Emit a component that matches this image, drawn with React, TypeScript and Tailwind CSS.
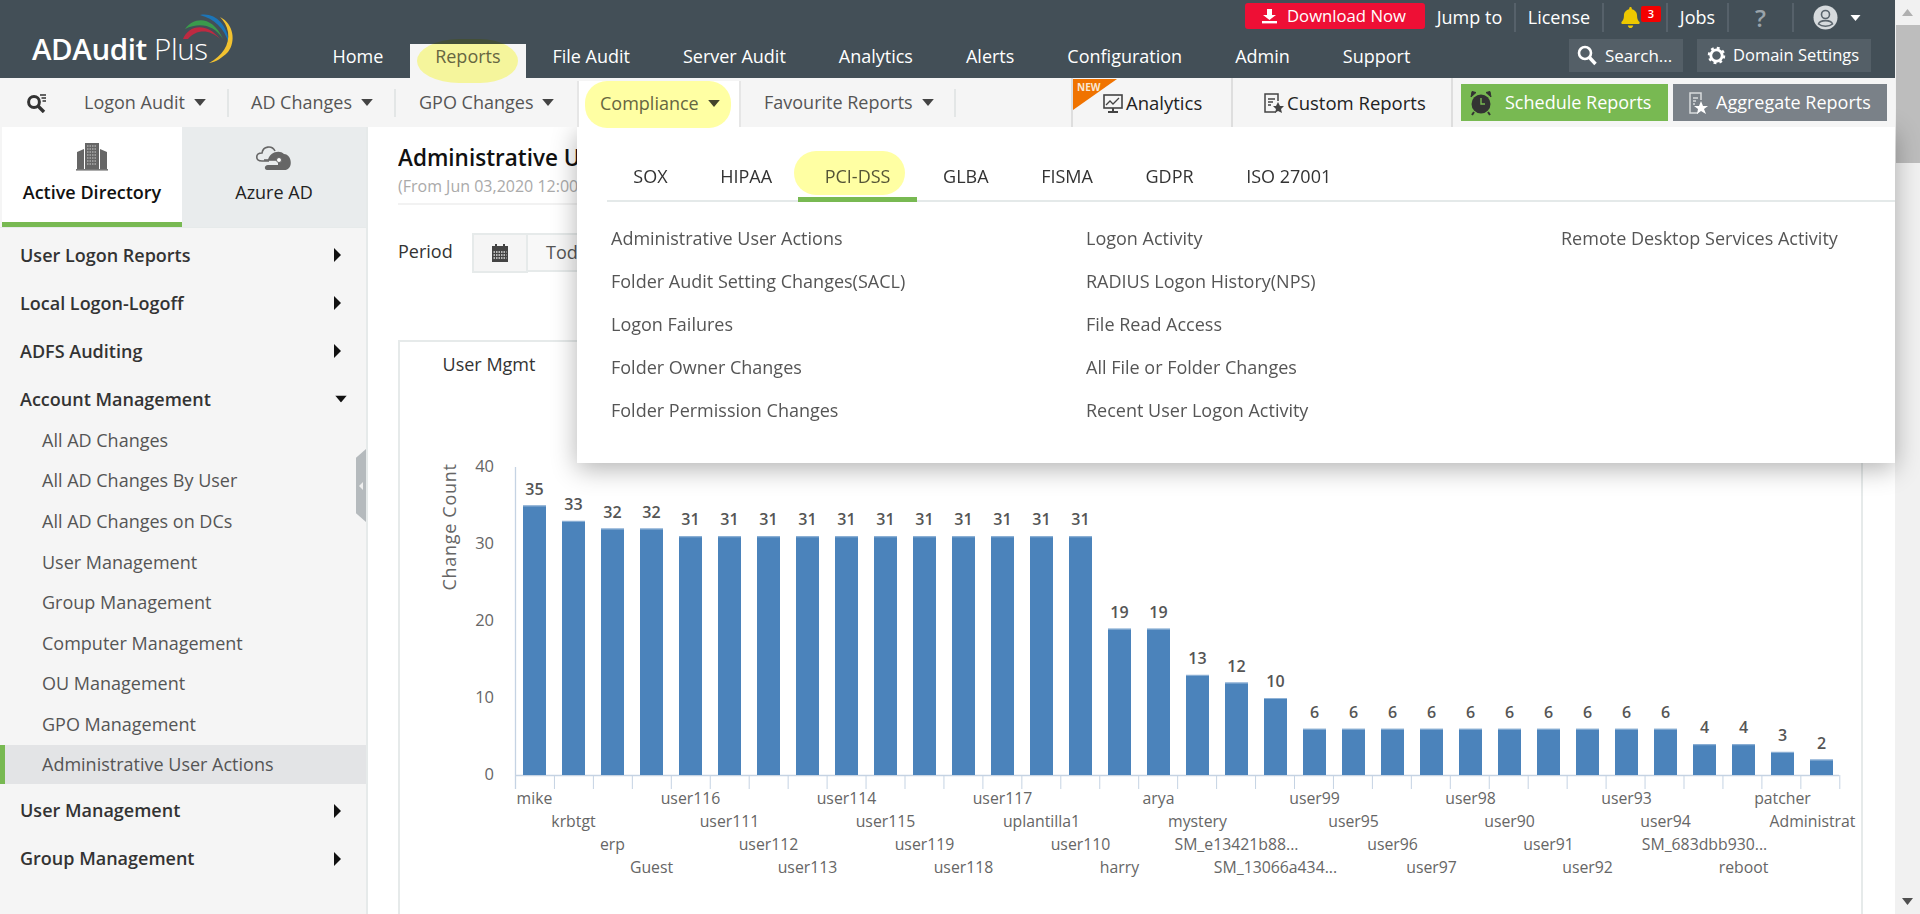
import React from "react";
import { FaBell } from "react-icons/fa";

const FONT = "font-['Open_Sans','Noto_Sans',sans-serif]";

const Down = ({ c = "#444", w = 11, h = 6 }: { c?: string; w?: number; h?: number }) => (
  <svg width={w} height={h} viewBox="0 0 10 6" className="shrink-0"><polygon points="0,0 10,0 5,6" fill={c} /></svg>
);
const Right = () => (
  <svg width="7" height="14" viewBox="0 0 7 14" className="shrink-0"><polygon points="0,0 7,7 0,14" fill="#111" /></svg>
);

const Logo = () => (
  <div className="relative w-[306px] h-[78px] shrink-0">
    <div className="absolute left-[32px] top-[29px] text-[29.5px] leading-[40px] text-white whitespace-nowrap tracking-[-0.4px]">
      <span className="font-semibold">ADAudit</span> <span className="font-light">Plus</span>
    </div>
    <svg className="absolute left-[176px] top-[12px]" width="60" height="54" viewBox="0 0 60 54" fill="none">
      <path d="M7 27C12 14 30 9 44 27C34 17 20 17 12 27Z" fill="#be2a41" />
      <path d="M9 17C18 5 36 3 47 27C38 13 24 10 9 17Z" fill="#3a9a4c" />
      <path d="M24 3C38 0 52 12 53 32C48 15 38 7 24 3Z" fill="#1c75b8" />
      <path d="M44 5C58 12 60 30 52 40C46 46 40 50 33 51C46 44 54 33 52 20C51 14 48 9 44 5Z" fill="#f2c230" />
    </svg>
  </div>
);

const MAIN = ["Home", "Reports", "File Audit", "Server Audit", "Analytics", "Alerts", "Configuration", "Admin", "Support"];

const TopLink = ({ children, last }: { children: React.ReactNode; last?: boolean }) => (
  <div className={`h-[29px] flex items-center justify-center ${last ? "" : "border-r-2 border-[#56616a]"}`}>{children}</div>
);

const Header = () => (
  <div className="h-[78px] bg-[#434f57] flex shrink-0 relative">
    <Logo />
    <div className="flex items-end h-full">
      {MAIN.map((m) =>
        m === "Reports" ? (
          <div key={m} className="h-[34px] w-[116px] bg-[#f5f5f5] text-[#666] text-[18px] flex items-center justify-center pb-[9px]">{m}</div>
        ) : (
          <div key={m} className="h-[34px] px-[26.5px] text-white text-[18px] flex items-center whitespace-nowrap pb-[9px]">{m}</div>
        )
      )}
    </div>
    <div className="absolute right-[24px] top-[39px] flex gap-[14px]">
      <div className="h-[33px] w-[114px] bg-[#545f67] flex items-center text-white text-[17px] pl-[8px] gap-[8px]">
        <svg width="20" height="21" viewBox="0 0 20 21" fill="none" stroke="#fff" strokeWidth="2.6"><circle cx="8" cy="8" r="6" /><path d="M12.5 12.5L18.5 19" strokeWidth="3.4" /></svg>
        Search...
      </div>
      <div className="h-[33px] w-[174px] bg-[#545f67] flex items-center text-white text-[16.5px] pl-[10px] gap-[7px]">
        <svg width="19" height="19" viewBox="0 0 20 20" fill="none" stroke="#fff"><circle cx="10" cy="10" r="6" strokeWidth="3" /><circle cx="10" cy="10" r="8" strokeWidth="2.4" strokeDasharray="3 3.3" /></svg>
        Domain Settings
      </div>
    </div>
    <div className="absolute right-0 top-[3px] flex items-start text-white text-[18px] w-[650px]">
      <div className="w-[180px] h-[26px] bg-[#ee0f35] rounded-[3px] flex items-center pl-[16px] gap-[9px] text-[16.7px] shrink-0">
        <svg width="17" height="17" viewBox="0 0 17 17" fill="#fff"><path d="M6 1H11V7H15L8.5 12L2 7H6Z" /><rect x="1" y="13" width="15" height="2.4" /></svg>
        Download Now
      </div>
      <div className="w-[91px]"><TopLink>Jump to</TopLink></div>
      <div className="w-[88px]"><TopLink>License</TopLink></div>
      <div className="w-[64px]">
        <TopLink>
          <div className="relative w-full flex justify-center">
            <FaBell className="text-[#eec800] text-[21px] mr-[10px]" />
            <span className="absolute left-[37px] top-[-1px] w-[20px] h-[16px] bg-[#f40000] rounded-[2px] text-[11px] leading-[16px] text-center font-semibold">3</span>
          </div>
        </TopLink>
      </div>
      <div className="w-[61px]"><TopLink>Jobs</TopLink></div>
      <div className="w-[65px]"><TopLink><span className="text-[#9aa3aa] text-[24px] font-semibold">?</span></TopLink></div>
      <div className="w-[101px] h-[29px] flex items-center pl-[19px] gap-[12px]">
        <svg width="25" height="25" viewBox="0 0 25 25"><circle cx="12.5" cy="12.5" r="12" fill="#d6dadd" /><circle cx="12.5" cy="9.5" r="4" fill="none" stroke="#5a646c" strokeWidth="1.6" /><path d="M5.5 19C7 14.5 18 14.5 19.5 19C16 22 9 22 5.5 19Z" fill="none" stroke="#5a646c" strokeWidth="1.6" /></svg>
        <Down c="#fff" w={11} h={6} />
      </div>
    </div>
  </div>
);

const SubItem = ({ label, w, sep = true, pl = 23 }: { label: string; w: string; sep?: boolean; pl?: number }) => (
  <div className={`${w} h-full flex items-center relative text-[#555] text-[18px] gap-[9px] shrink-0 whitespace-nowrap`} style={{ paddingLeft: pl }}>
    {label}
    <Down w={12} h={7} />
    {sep && <div className="absolute right-0 top-[11px] h-[28px] w-[2px] bg-[#e3e6e6]" />}
  </div>
);

const SubNav = () => (
  <div className="h-[49px] bg-[#f5f5f5] flex shrink-0 relative z-20">
    <div className="w-[66px] h-full flex items-center pl-[26px] shrink-0">
      <svg width="21" height="20" viewBox="0 0 21 20" fill="none" stroke="#333"><circle cx="8" cy="9" r="5.4" strokeWidth="3" /><path d="M12 13L18 19" strokeWidth="3.4" /><path d="M14 2H20M15.5 5H20M16.5 8H20" strokeWidth="1.3" /></svg>
    </div>
    <SubItem label="Logon Audit" w="w-[163px]" pl={18} />
    <SubItem label="AD Changes" w="w-[167px]" pl={22} />
    <SubItem label="GPO Changes" w="w-[181px]" sep={false} pl={23} />
    <div className="w-[164px] h-[46px] mt-[3px] bg-white border-l-2 border-r-2 border-[#e6e6e6] flex items-center pl-[21px] gap-[9px] text-[#666] text-[18px] shrink-0 pb-[1px]">
      Compliance
      <Down w={12} h={7} />
    </div>
    <SubItem label="Favourite Reports" w="w-[215px]" />
    <div className="w-[115px] shrink-0" />
    <div className="w-[160px] h-full border-l-2 border-[#dedede] relative flex items-center pl-[29px] gap-[2px] text-[#222] text-[18.5px] shrink-0">
      <svg className="absolute left-0 top-0" width="44" height="32" viewBox="0 0 44 32"><polygon points="0,1 44,1 0,32" fill="#f07300" /></svg>
      <span className="absolute left-[4px] top-[2px] text-[10px] leading-[14px] font-bold text-[#f8e7d2]">NEW</span>
      <svg width="22" height="22" viewBox="0 0 22 22" fill="none" stroke="#444" className="relative"><rect x="2" y="3" width="18" height="13" strokeWidth="1.6" /><path d="M4 13L8 9L11 12L17 6" strokeWidth="1.3" /><path d="M11 16V19M6 20H16" strokeWidth="2" /></svg>
      Analytics
    </div>
    <div className="w-[222px] h-full border-l-2 border-r-2 border-[#dedede] flex items-center pl-[30px] gap-[3px] text-[#222] text-[18.5px] shrink-0">
      <svg width="21" height="22" viewBox="0 0 21 22" fill="none" stroke="#444"><path d="M13 20H2V2H15V9" strokeWidth="1.5" /><path d="M5 7H12M5 10H10M5 13H8" strokeWidth="1.4" /><polygon points="15,10 17,14 21,14 18,17 19,21 15,19 12,21 13,17 10,14 13,14" fill="#444" stroke="none" /></svg>
      Custom Reports
    </div>
    <div className="ml-[8px] mt-[6px] w-[207px] h-[37px] bg-[#78b952] text-white text-[18px] flex items-center pl-[8px] gap-[12px] shrink-0">
      <svg width="24" height="26" viewBox="0 0 24 26"><circle cx="12" cy="14" r="9.5" fill="#333" /><path d="M2 7L7 2.5L3 1.5ZM22 7L17 2.5L21 1.5Z" fill="#333" stroke="#333" /><path d="M12 8V14H16" stroke="#78b952" strokeWidth="1.4" fill="none" /><path d="M5 22L3 25M19 22L21 25" stroke="#333" strokeWidth="2" /></svg>
      Schedule Reports
    </div>
    <div className="ml-[5px] mt-[6px] w-[214px] h-[37px] bg-[#7a8188] text-white text-[18px] flex items-center pl-[15px] gap-[8px] shrink-0">
      <svg width="20" height="24" viewBox="0 0 20 24" fill="none" stroke="#d8dadc"><path d="M10 22H2V2H13V9" strokeWidth="1.5" /><path d="M5 7H10M5 10H8M5 13H7" strokeWidth="1.4" /><polygon points="13,10 15,15 20,15 16,18 18,23 13,20 9,23 10,18 6,15 11,15" fill="#fff" stroke="none" /></svg>
      Aggregate Reports
    </div>
  </div>
);

const GROUPS_TOP = ["User Logon Reports", "Local Logon-Logoff", "ADFS Auditing"];
const SUBS = ["All AD Changes", "All AD Changes By User", "All AD Changes on DCs", "User Management", "Group Management", "Computer Management", "OU Management", "GPO Management"];

const Group = ({ label, open }: { label: string; open?: boolean }) => (
  <div className="h-[48px] flex items-center pl-[20px] text-[18px] font-semibold text-[#333] relative">
    {label}
    <span className={`absolute top-1/2 -translate-y-1/2 ${open ? "left-[335px]" : "left-[334px]"}`}>{open ? <Down c="#111" w={12} h={7} /> : <Right />}</span>
  </div>
);

const Sidebar = () => (
  <div className="w-[368px] shrink-0 bg-[#f5f5f5] border-r-2 border-[#e6eaea] relative h-full">
    <div className="h-[101px] flex border-b border-[#e6eaea] pl-[2px] bg-[#f5f5f5]">
      <div className="w-[180px] h-full bg-white border-b-[5px] border-[#78b952] flex flex-col items-center pt-[16px] text-[18px] font-semibold text-[#111]">
        <svg width="32" height="28" viewBox="0 0 32 28">
          <path d="M1 27V9L8 6V27ZM24 6L31 9V27H24Z" fill="#666" />
          <rect x="9" y="0" width="14" height="27" fill="#666" />
          <path d="M11 3H21M11 6H21M11 9H21M11 12H21M11 15H21M11 18H21M11 21H21" stroke="#ccc" strokeWidth="1" strokeDasharray="1.5 1" />
          <rect x="0" y="26" width="32" height="1.6" fill="#777" />
        </svg>
        <span className="mt-[9px] leading-[24px]">Active Directory</span>
      </div>
      <div className="flex-1 h-full bg-[#e9eced] flex flex-col items-center pt-[18px] text-[18px] text-[#222]">
        <svg width="38" height="26" viewBox="0 0 38 26" fill="none">
          <path d="M14 16H7C0 16 0 8 7 8C8 1 17 0 20 6" stroke="#666" strokeWidth="1.6" />
          <path d="M12 25C9 25 9 20 13 20H23V15H13C14 8 24 4 29 9C37 9 39 25 29 25Z" fill="#666" />
          <path d="M9 15H23" stroke="#666" strokeWidth="1.6" />
          <circle cx="24" cy="15" r="2.5" fill="#fff" stroke="#666" />
        </svg>
        <span className="mt-[9px] leading-[24px]">Azure AD</span>
      </div>
    </div>
    <div className="pt-[3px]">
      {GROUPS_TOP.map((g) => <Group key={g} label={g} />)}
      <Group label="Account Management" open />
      <div className="-mt-[3px]">
        {SUBS.map((s) => (
          <div key={s} className="h-[40.6px] flex items-center pl-[42px] text-[18px] text-[#555]">{s}</div>
        ))}
        <div className="h-[39px] flex items-center pl-[37px] text-[18px] text-[#555] bg-[#e3e4e6] border-l-[5px] border-[#78b952]">Administrative User Actions</div>
      </div>
      <div className="pt-[3px]">
        <Group label="User Management" />
        <Group label="Group Management" />
      </div>
    </div>
    <div className="absolute right-0 top-[322px] w-[10px] h-[73px] bg-[#b5babd] [clip-path:polygon(100%_0,100%_100%,0_88%,0_12%)] flex items-center justify-center">
      <svg width="4" height="8" viewBox="0 0 4 8"><polygon points="4,0 0,4 4,8" fill="#eee" /></svg>
    </div>
  </div>
);

const VALUES = [35, 33, 32, 32, 31, 31, 31, 31, 31, 31, 31, 31, 31, 31, 31, 19, 19, 13, 12, 10, 6, 6, 6, 6, 6, 6, 6, 6, 6, 6, 4, 4, 3, 2];
const NAMES = ["mike", "krbtgt", "erp", "Guest", "user116", "user111", "user112", "user113", "user114", "user115", "user119", "user118", "user117", "uplantilla1", "user110", "harry", "arya", "mystery", "SM_e13421b88...", "SM_13066a434...", "user99", "user95", "user96", "user97", "user98", "user90", "user91", "user92", "user93", "user94", "SM_683dbb930...", "reboot", "patcher", "Administrat"];

const Chart = () => {
  const base = 776;
  const cx = (i: number) => 534.5 + i * 39;
  return (
    <svg className="block" width="1461" height="524" viewBox="400 388 1461 524" fontFamily="'Open Sans', sans-serif">
      <text transform="translate(456 528) rotate(-90)" textAnchor="middle" fontSize="18" fill="#666" letterSpacing="0.7">Change Count</text>
      {[0, 10, 20, 30, 40].map((v) => (
        <text key={v} x="494" y={base - v * 7.7 + 5} textAnchor="end" fontSize="16.5" fill="#666">{v}</text>
      ))}
      <path d="M515.5 468V790" stroke="#c5d3e3" strokeWidth="1.3" />
      <path d="M515 776.5H1839" stroke="#c5d3e3" strokeWidth="1.5" />
      {Array.from({ length: 35 }).map((_, i) => (
        <path key={i} d={`M${515.5 + i * 38.95} 776V790`} stroke="#c5d3e3" strokeWidth="1" />
      ))}
      {VALUES.map((v, i) => {
        const h = v * 7.7;
        return (
          <g key={i}>
            <rect x={523 + i * 39} y={base - h} width="23" height={h} fill="#4b83bb" />
            <rect x={523 + i * 39} y={base - h} width="23" height="1" fill="#8fb2d6" />
            <text x={cx(i)} y={base - h - 11} textAnchor="middle" fontSize="16" fontWeight="600" fill="#555">{v}</text>
          </g>
        );
      })}
      {NAMES.map((n, i) => (
        <text key={n} x={cx(i) + (i === 33 ? -9 : 0)} y={805 + (i % 4) * 23} textAnchor="middle" fontSize="15.8" fill="#666">{n}</text>
      ))}
    </svg>
  );
};

const Main = () => (
  <div className="flex-1 min-w-0 bg-white h-full pl-[30px] pr-[32px] overflow-hidden">
    <div className="h-[78px] pt-[16px] border-b-2 border-[#f2f2f2] w-full">
      <div className="w-[179px] overflow-hidden text-[22.5px] leading-[30px] font-semibold text-[#111] whitespace-nowrap">Administrative User Actions</div>
      <div className="w-[179px] overflow-hidden text-[16px] leading-[20px] text-[#aaa] mt-[3px] whitespace-nowrap">(From Jun 03,2020 12:00 AM)</div>
    </div>
    <div className="flex items-start mt-[28px] h-[40px]">
      <div className="w-[74px] text-[18px] text-[#333] leading-[36px]">Period</div>
      <div className="w-[56px] h-[40px] bg-[#f5f5f5] border-2 border-[#e6eaea] flex items-center justify-center">
        <svg width="18" height="19" viewBox="0 0 18 19"><rect x="1" y="2" width="16" height="16" fill="#444" /><rect x="4" y="0" width="2" height="4" fill="#444" /><rect x="12" y="0" width="2" height="4" fill="#444" /><path d="M2.5 8H15.5M2.5 11H15.5M2.5 14H15.5" stroke="#ddd" strokeWidth="1.3" strokeDasharray="1.5 1" /></svg>
      </div>
      <div className="w-[120px] h-[39px] border-2 border-l-0 border-[#e6eaea] bg-[#f8f8f8] text-[18px] text-[#555] flex items-center pl-[18px]">Today</div>
    </div>
    <div className="mt-[67px] h-[47px] flex border-b-[3px] border-[#e6eaea]">
      <div className="w-[182px] h-[47px] bg-white border-l-2 border-t-2 border-[#e6eaea] flex items-center justify-center text-[18px] text-[#333] pr-[2px]">User Mgmt</div>
    </div>
    <div className="border-l-2 border-r-2 border-[#e6eaea] h-[530px] w-[1465px] overflow-hidden">
      <Chart />
    </div>
  </div>
);

const COLS = [
  ["Administrative User Actions", "Folder Audit Setting Changes(SACL)", "Logon Failures", "Folder Owner Changes", "Folder Permission Changes"],
  ["Logon Activity", "RADIUS Logon History(NPS)", "File Read Access", "All File or Folder Changes", "Recent User Logon Activity"],
  ["Remote Desktop Services Activity"],
];
const TABS = ["SOX", "HIPAA", "PCI-DSS", "GLBA", "FISMA", "GDPR", "ISO 27001"];

const Popup = () => (
  <div className="absolute left-[577px] top-[127px] right-0 h-[336px] bg-white shadow-[0_6px_24px_rgba(0,0,0,0.3)] z-10">
    <div className="ml-[30px] h-[75px] flex items-end border-b-2 border-[#e4e9e9]">
      {TABS.map((t) => (
        <div key={t} className={`h-[50px] -mb-[2px] px-[26.3px] pt-[4px] flex items-center text-[18px] whitespace-nowrap ${t === "PCI-DSS" ? "border-b-[5px] border-[#78b952] text-[#555]" : "border-b-[5px] border-transparent text-[#333]"}`}>{t}</div>
      ))}
    </div>
    <div className="grid grid-cols-[475px_475px_1fr] pl-[34px] pt-[15px]">
      {COLS.map((col, i) => (
        <div key={i}>
          {col.map((l) => <div key={l} className="h-[43px] flex items-center text-[18px] text-[#555] whitespace-nowrap">{l}</div>)}
        </div>
      ))}
    </div>
  </div>
);

const Scrollbar = () => (
  <div className="w-[25px] h-full bg-[#f1f1f1] flex flex-col shrink-0">
    <div className="h-[25px] flex items-center justify-center"><svg width="11" height="7" viewBox="0 0 11 7"><polygon points="5.5,0 11,7 0,7" fill="#b0b0b0" /></svg></div>
    <div className="h-[138px] bg-[#bdbdbd] ml-[1px]" />
    <div className="flex-1" />
    <div className="h-[25px] flex items-center justify-center"><svg width="11" height="7" viewBox="0 0 11 7"><polygon points="0,0 11,0 5.5,7" fill="#505050" /></svg></div>
  </div>
);

const Blob = ({ cls }: { cls: string }) => (
  <div className={`absolute bg-[#ffffa3] mix-blend-multiply z-30 pointer-events-none ${cls}`} />
);

export default function App() {
  return (
    <div className={`${FONT} w-[1920px] h-[914px] flex overflow-hidden`}>
      <div className="w-[1895px] h-full flex flex-col relative shrink-0">
        <Header />
        <SubNav />
        <div className="flex-1 min-h-0 flex relative">
          <Sidebar />
          <Main />
        </div>
        <Popup />
        <Blob cls="left-[417px] top-[39px] w-[101px] h-[44px] rounded-[50%_45%_45%_50%/60%]" />
        <Blob cls="left-[585px] top-[81px] w-[146px] h-[47px] rounded-[22px]" />
        <Blob cls="left-[794px] top-[151px] w-[111px] h-[44px] rounded-[24px]" />
      </div>
      <Scrollbar />
    </div>
  );
}
